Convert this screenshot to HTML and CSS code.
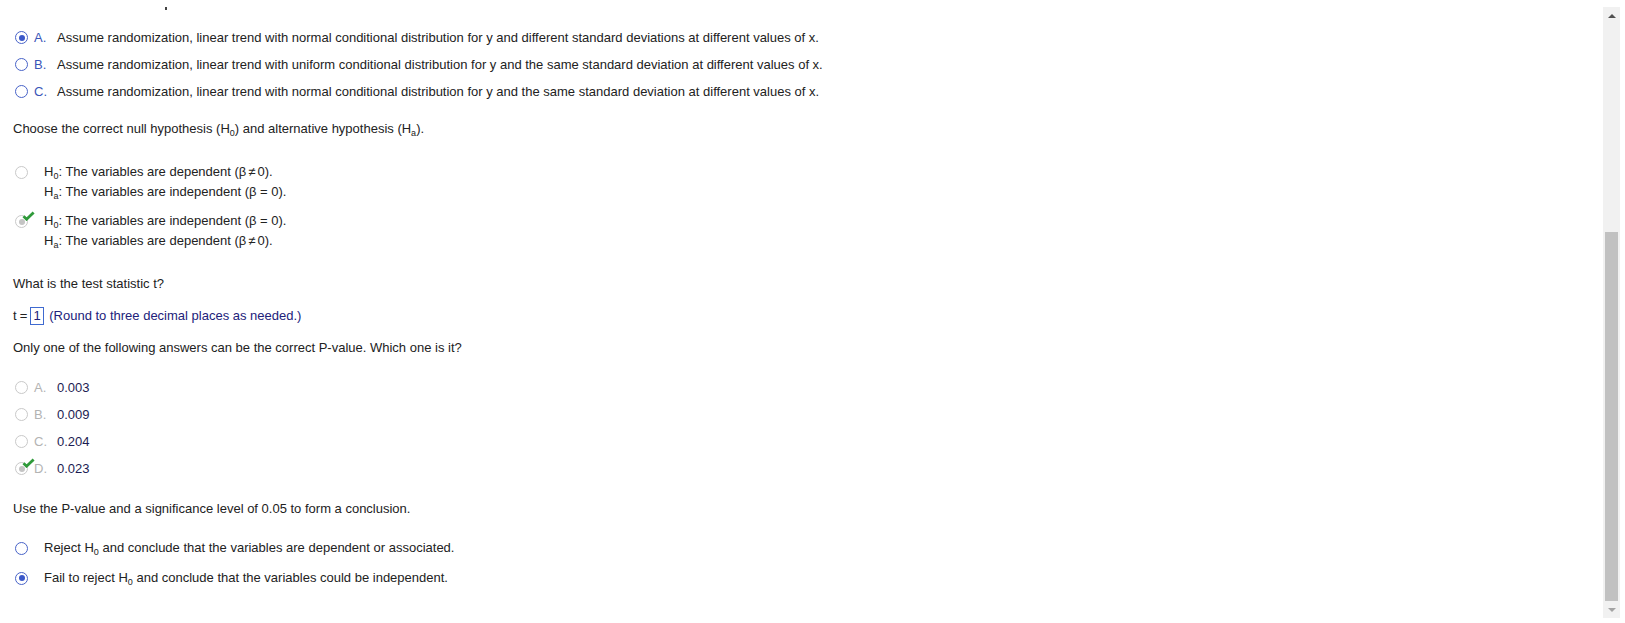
FILE: index.html
```html
<!DOCTYPE html>
<html>
<head>
<meta charset="utf-8">
<link rel="stylesheet" href="styles.css">
</head>
<body>
<div class="page">
  <main class="content">
    <div class="tick"></div>

    <div class="choices first">
      <div class="opt"><span class="radio blue on"></span><span class="letter blue-t">A.</span><span>Assume randomization, linear trend with normal conditional distribution for y and different standard deviations at different values of x.</span></div>
      <div class="opt"><span class="radio blue"></span><span class="letter blue-t">B.</span><span>Assume randomization, linear trend with uniform conditional distribution for y and the same standard deviation at different values of x.</span></div>
      <div class="opt"><span class="radio blue"></span><span class="letter blue-t">C.</span><span>Assume randomization, linear trend with normal conditional distribution for y and the same standard deviation at different values of x.</span></div>
    </div>

    <p class="q q-choose">Choose the correct null hypothesis (H<sub>0</sub>) and alternative hypothesis (H<sub>a</sub>).</p>

    <div class="hyp hyp1">
      <span class="radio gray"></span>
      <div class="hyp-text">
        <div class="hl">H<sub>0</sub>: The variables are dependent (β<span class="ne">≠</span>0).</div>
        <div class="hl">H<sub>a</sub>: The variables are independent (β = 0).</div>
      </div>
    </div>

    <div class="hyp hyp2">
      <span class="radio gray on">
        <svg class="check" width="13" height="10" viewBox="0 0 13 10"><path d="M1.5 5.2 L4.6 8.2 L11.6 1.4" fill="none" stroke="#2f9a3a" stroke-width="2.8" stroke-linejoin="miter"/></svg>
      </span>
      <div class="hyp-text">
        <div class="hl">H<sub>0</sub>: The variables are independent (β = 0).</div>
        <div class="hl">H<sub>a</sub>: The variables are dependent (β<span class="ne">≠</span>0).</div>
      </div>
    </div>

    <p class="q q-what">What is the test statistic t?</p>

    <div class="tline">t<span class="eq">=</span><span class="box">1</span><span class="navy">(Round to three decimal places as needed.)</span></div>

    <p class="q q-only">Only one of the following answers can be the correct P-value. Which one is it?</p>

    <div class="choices pval">
      <div class="opt"><span class="radio gray"></span><span class="letter gray-t">A.</span><span class="dark">0.003</span></div>
      <div class="opt"><span class="radio gray"></span><span class="letter gray-t">B.</span><span class="dark">0.009</span></div>
      <div class="opt"><span class="radio gray"></span><span class="letter gray-t">C.</span><span class="dark">0.204</span></div>
      <div class="opt"><span class="radio gray on">
        <svg class="check" width="13" height="10" viewBox="0 0 13 10"><path d="M1.5 5.2 L4.6 8.2 L11.6 1.4" fill="none" stroke="#2f9a3a" stroke-width="2.8" stroke-linejoin="miter"/></svg>
      </span><span class="letter gray-t">D.</span><span class="dark">0.023</span></div>
    </div>

    <p class="q q-use">Use the P-value and a significance level of 0.05 to form a conclusion.</p>

    <div class="concl">
      <div class="copt"><span class="radio blue"></span><span>Reject H<sub>0</sub> and conclude that the variables are dependent or associated.</span></div>
      <div class="copt"><span class="radio blue on"></span><span>Fail to reject H<sub>0</sub> and conclude that the variables could be independent.</span></div>
    </div>
  </main>

  <aside class="scrollbar">
    <div class="sb-btn"><span class="arrow-up"></span></div>
    <div class="sb-track"><div class="sb-thumb"></div></div>
    <div class="sb-btn"><span class="arrow-down"></span></div>
  </aside>
</div>
</body>
</html>
```

FILE: styles.css
```css
html, body {
  margin: 0;
  padding: 0;
  background: #ffffff;
}

body {
  font-family: "Liberation Sans", Arial, sans-serif;
  font-size: 13px;
  color: #222222;
  height: 623px;
  overflow: hidden;
}

.page {
  display: flex;
  height: 623px;
}

.content {
  flex: 1;
  padding-left: 13px;
}

.tick {
  width: 2px;
  height: 3px;
  background: #444444;
  margin: 7px 0 0 152px;
}

sub {
  font-size: 9px;
  vertical-align: -3px;
  line-height: 0;
}

.ne {
  padding: 0 2px;
}

.q {
  margin: 0;
  line-height: 20px;
}

.choices.first {
  margin-top: 14px;
}

.opt {
  display: flex;
  align-items: center;
  height: 27px;
  line-height: 27px;
}

.radio {
  position: relative;
  flex: none;
  box-sizing: border-box;
  width: 13px;
  height: 13px;
  border-radius: 50%;
  margin-left: 2px;
  background: #ffffff;
}

.radio.blue {
  border: 1.5px solid #4863c8;
}

.radio.gray {
  border: 1.5px solid #c9c9c9;
}

.radio.on::after {
  content: "";
  position: absolute;
  left: 50%;
  top: 50%;
  width: 6px;
  height: 6px;
  margin: -3px 0 0 -3px;
  border-radius: 50%;
}

.radio.blue.on::after {
  background: #3b58c9;
}

.radio.gray.on::after {
  background: #c4c4c4;
}

.check {
  position: absolute;
  left: 6px;
  top: -5px;
}

.letter {
  width: 23px;
  margin-left: 6px;
  flex: none;
}

.blue-t {
  color: #3a55b8;
}

.gray-t {
  color: #b3b3b3;
}

.navy {
  color: #22227a;
}

.dark {
  color: #1c1c52;
}

.q-choose {
  margin-top: 14px;
}

.hyp {
  display: flex;
  align-items: flex-start;
}

.hyp .radio {
  margin-top: 4px;
}

.hyp-text {
  margin-left: 16px;
}

.hl {
  line-height: 20px;
}

.hyp1 {
  margin-top: 23px;
}

.hyp2 {
  margin-top: 9px;
}

.q-what {
  margin-top: 23px;
}

.tline {
  display: flex;
  align-items: center;
  margin-top: 12px;
  height: 20px;
  line-height: 20px;
}

.eq {
  margin: 0 3px 0 3px;
}

.box {
  box-sizing: border-box;
  width: 14px;
  height: 18px;
  line-height: 16px;
  border: 1px solid #3f6ad0;
  text-align: center;
  color: #22227a;
  margin-right: 5px;
}

.q-only {
  margin-top: 12px;
}

.choices.pval {
  margin-top: 16px;
}

.q-use {
  margin-top: 17px;
}

.concl {
  margin-top: 14px;
}

.copt {
  display: flex;
  align-items: center;
  height: 30px;
  line-height: 30px;
}

.copt .radio {
  margin-right: 16px;
}

/* scrollbar */
.scrollbar {
  flex: none;
  width: 17px;
  margin: 7px 5px 5px 0;
  background: #f1f1f1;
  display: flex;
  flex-direction: column;
}

.sb-btn {
  height: 17px;
  flex: none;
  display: flex;
  align-items: center;
  justify-content: center;
}

.sb-track {
  flex: 1;
  display: flex;
  flex-direction: column;
  justify-content: flex-end;
}

.sb-thumb {
  height: 369px;
  margin: 0 2px;
  background: #c1c1c1;
}

.arrow-up {
  width: 0;
  height: 0;
  border-left: 4px solid transparent;
  border-right: 4px solid transparent;
  border-bottom: 4px solid #505050;
}

.arrow-down {
  width: 0;
  height: 0;
  border-left: 4px solid transparent;
  border-right: 4px solid transparent;
  border-top: 4px solid #a3a3a3;
}
```
